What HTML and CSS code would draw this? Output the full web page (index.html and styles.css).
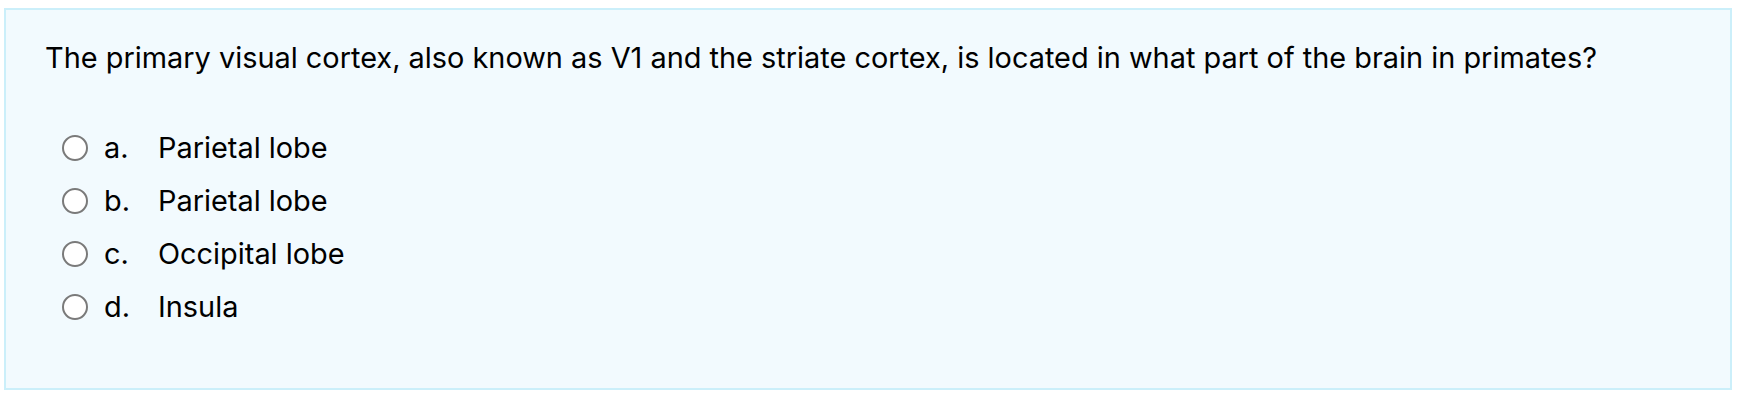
FILE: index.html
```html
<!DOCTYPE html>
<html>
<head>
<meta charset="utf-8">
<link rel="stylesheet" href="styles.css">
</head>
<body>
<div class="card">
  <p class="question">The primary visual cortex, also known as V1 and the striate cortex, is located in what part of the brain in primates?</p>
  <div class="options">
    <label class="option"><span class="radio"></span><span class="letter">a.</span><span class="text">Parietal lobe</span></label>
    <label class="option"><span class="radio"></span><span class="letter">b.</span><span class="text">Parietal lobe</span></label>
    <label class="option"><span class="radio"></span><span class="letter">c.</span><span class="text">Occipital lobe</span></label>
    <label class="option"><span class="radio"></span><span class="letter">d.</span><span class="text">Insula</span></label>
  </div>
</div>
</body>
</html>
```

FILE: styles.css
```css
html, body {
  margin: 0;
  padding: 0;
  background: #ffffff;
}
body {
  padding: 8px 0 0 4px;
  font-family: Inter, "Liberation Sans", Arial, sans-serif;
  color: #000;
}
.card {
  box-sizing: border-box;
  width: 1728px;
  height: 382px;
  background: #f2fafe;
  border: 2px solid #cbeffa;
  padding: 28px 0 0 39px;
}
.question {
  margin: 0;
  font-size: 28.9px;
  line-height: 40px;
}
.options {
  margin-top: 43px;
  display: flex;
  flex-direction: column;
}
.option {
  display: flex;
  align-items: center;
  height: 53px;
  font-size: 28.9px;
}
.radio {
  box-sizing: border-box;
  width: 26px;
  height: 26px;
  border: 2px solid #7a7a7a;
  border-radius: 50%;
  background: #ffffff;
  margin-left: 17px;
  margin-right: 16px;
}
.letter {
  width: 54px;
}
```
